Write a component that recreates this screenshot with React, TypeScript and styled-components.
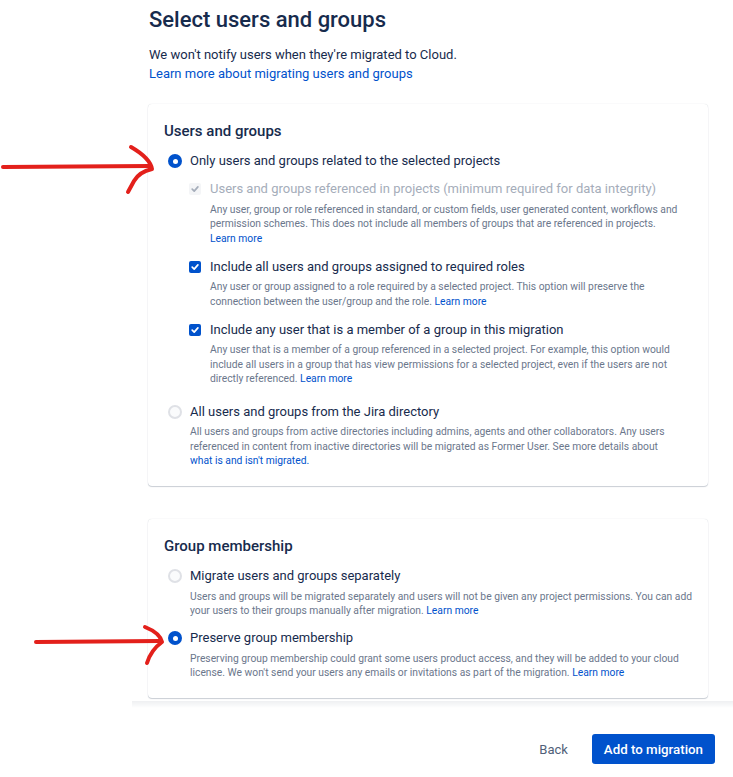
import React from "react";
import styled, { createGlobalStyle } from "styled-components";

const GlobalStyle = createGlobalStyle`
  html, body { margin: 0; padding: 0; background: #ffffff; }
  body {
    font-family: Roboto, "Noto Sans", "Liberation Sans", sans-serif;
    color: #172b4d;
    -webkit-font-smoothing: antialiased;
  }
  * { box-sizing: border-box; }
`;

const Page = styled.div`
  position: relative;
  width: 733px;
  min-height: 777px;
  padding-top: 6px;
`;

const Main = styled.main`
  margin-left: 148px;
  width: 560px;
  display: flex;
  flex-direction: column;
`;

const Title = styled.h1`
  margin: 0 0 0 1px;
  font-size: 22px;
  line-height: 28px;
  font-weight: 500;
  color: #172b4d;
`;

const Intro = styled.p`
  margin: 11px 0 0 1px;
  font-size: 13px;
  line-height: 19px;
  color: #172b4d;
`;

const Link = styled.a`
  color: #0052cc;
  text-decoration: none;
  cursor: pointer;
`;

const Card = styled.section<{ $gapTop?: number }>`
  margin-top: ${(p) => p.$gapTop ?? 0}px;
  background: #fff;
  border-radius: 4px;
  box-shadow: 0 1px 1px rgba(9, 30, 66, 0.2), 0 0 1px rgba(9, 30, 66, 0.2);
  padding: 17px 16px 17.5px 16px;
`;

const CardTitle = styled.h2`
  margin: 0;
  font-size: 15px;
  line-height: 20px;
  font-weight: 500;
  color: #172b4d;
`;

const OptionList = styled.div<{ $gap: number }>`
  margin-top: 10px;
  display: flex;
  flex-direction: column;
  gap: ${(p) => p.$gap}px;
`;

const OptionRow = styled.div`
  display: grid;
  grid-template-columns: 26px 1fr;
`;

const ControlCell = styled.div`
  height: 20px;
  display: flex;
  align-items: center;
  justify-content: center;
  padding-right: 4px;
`;

const Radio = styled.span<{ $checked?: boolean }>`
  width: 14px;
  height: 14px;
  border-radius: 50%;
  display: flex;
  align-items: center;
  justify-content: center;
  background: ${(p) => (p.$checked ? "#0052cc" : "#fafbfc")};
  border: ${(p) => (p.$checked ? "none" : "2px solid #dfe1e6")};
  &::after {
    content: "";
    display: ${(p) => (p.$checked ? "block" : "none")};
    width: 5px;
    height: 5px;
    border-radius: 50%;
    background: #fff;
  }
`;

const Label = styled.div<{ $disabled?: boolean }>`
  font-size: 13px;
  line-height: 20px;
  white-space: nowrap;
  color: ${(p) => (p.$disabled ? "#a5adba" : "#172b4d")};
`;

const Desc = styled.p`
  margin: 3.5px 0 0 0;
  font-size: 10.3px;
  line-height: 14.5px;
  white-space: nowrap;
  color: #6b778c;
`;

const SubList = styled.div`
  margin-top: 8px;
  margin-left: -2px;
  display: flex;
  flex-direction: column;
  gap: 10.5px;
`;

const SubRow = styled.div`
  display: grid;
  grid-template-columns: 22px 1fr;
`;

const CheckCell = styled.div`
  height: 20px;
  display: flex;
  align-items: center;
  padding-left: 1px;
`;

const Checkbox = styled.span<{ $disabled?: boolean }>`
  width: 12px;
  height: 12px;
  border-radius: 2px;
  display: flex;
  align-items: center;
  justify-content: center;
  background: ${(p) => (p.$disabled ? "#f4f5f7" : "#0052cc")};
  color: ${(p) => (p.$disabled ? "#a5adba" : "#ffffff")};
`;

const Footer = styled.footer`
  margin-top: 3px;
  margin-left: 132px;
  height: 74px;
  background: linear-gradient(#eff0f2 0px, #f7f8f9 4px, #ffffff 7px);
  display: flex;
  justify-content: flex-end;
  align-items: flex-end;
  gap: 14px;
  padding: 0 18px 11px 0;
`;

const Button = styled.button<{ $primary?: boolean }>`
  height: 30px;
  border: none;
  border-radius: 3px;
  font-family: inherit;
  font-size: ${(p) => (p.$primary ? 13.3 : 13)}px;
  font-weight: ${(p) => (p.$primary ? 500 : 400)};
  padding: 0 ${(p) => (p.$primary ? 12 : 10)}px;
  background: ${(p) => (p.$primary ? "#0052cc" : "transparent")};
  color: ${(p) => (p.$primary ? "#ffffff" : "#505f79")};
  cursor: pointer;
`;

const Annotations = styled.svg`
  position: absolute;
  left: 0;
  top: 0;
  pointer-events: none;
  overflow: visible;
`;

const Check = () => (
  <svg width="10" height="10" viewBox="0 0 10 10">
    <path d="M2.2 5.2 L4.2 7.1 L7.9 2.9" fill="none" stroke="currentColor" strokeWidth="1.7" strokeLinecap="round" strokeLinejoin="round" />
  </svg>
);

type Sub = { label: string; desc: React.ReactNode; disabled?: boolean };

const subs: Sub[] = [
  {
    label: "Users and groups referenced in projects (minimum required for data integrity)",
    disabled: true,
    desc: (
      <>
        Any user, group or role referenced in standard, or custom fields, user generated content, workflows and
        <br />
        permission schemes. This does not include all members of groups that are referenced in projects.
        <br />
        <Link>Learn more</Link>
      </>
    ),
  },
  {
    label: "Include all users and groups assigned to required roles",
    desc: (
      <>
        Any user or group assigned to a role required by a selected project. This option will preserve the
        <br />
        connection between the user/group and the role. <Link>Learn more</Link>
      </>
    ),
  },
  {
    label: "Include any user that is a member of a group in this migration",
    desc: (
      <>
        Any user that is a member of a group referenced in a selected project. For example, this option would
        <br />
        include all users in a group that has view permissions for a selected project, even if the users are not
        <br />
        directly referenced. <Link>Learn more</Link>
      </>
    ),
  },
];

const Option: React.FC<{ checked?: boolean; label: string; children?: React.ReactNode }> = ({ checked, label, children }) => (
  <OptionRow>
    <ControlCell>
      <Radio $checked={checked} />
    </ControlCell>
    <div>
      <Label>{label}</Label>
      {children}
    </div>
  </OptionRow>
);

export default function App() {
  return (
    <>
      <GlobalStyle />
      <Page>
        <Main>
          <Title>Select users and groups</Title>
          <Intro>
            We won't notify users when they're migrated to Cloud.
            <br />
            <Link>Learn more about migrating users and groups</Link>
          </Intro>

          <Card $gapTop={21}>
            <CardTitle>Users and groups</CardTitle>
            <OptionList $gap={15}>
              <Option checked label="Only users and groups related to the selected projects">
                <SubList>
                  {subs.map((s) => (
                    <SubRow key={s.label}>
                      <CheckCell>
                        <Checkbox $disabled={s.disabled}>
                          <Check />
                        </Checkbox>
                      </CheckCell>
                      <div>
                        <Label $disabled={s.disabled}>{s.label}</Label>
                        <Desc>{s.desc}</Desc>
                      </div>
                    </SubRow>
                  ))}
                </SubList>
              </Option>
              <Option label="All users and groups from the Jira directory">
                <Desc>
                  All users and groups from active directories including admins, agents and other collaborators. Any users
                  <br />
                  referenced in content from inactive directories will be migrated as Former User. See more details about
                  <br />
                  <Link>what is and isn't migrated.</Link>
                </Desc>
              </Option>
            </OptionList>
          </Card>

          <Card $gapTop={33}>
            <CardTitle>Group membership</CardTitle>
            <OptionList $gap={9.5}>
              <Option label="Migrate users and groups separately">
                <Desc>
                  Users and groups will be migrated separately and users will not be given any project permissions. You can add
                  <br />
                  your users to their groups manually after migration. <Link>Learn more</Link>
                </Desc>
              </Option>
              <Option checked label="Preserve group membership">
                <Desc>
                  Preserving group membership could grant some users product access, and they will be added to your cloud
                  <br />
                  license. We won't send your users any emails or invitations as part of the migration. <Link>Learn more</Link>
                </Desc>
              </Option>
            </OptionList>
          </Card>
        </Main>

        <Footer>
          <Button>Back</Button>
          <Button $primary>Add to migration</Button>
        </Footer>

        <Annotations width="733" height="777" viewBox="0 0 733 777">
          <g fill="none" stroke="#e3201b" strokeWidth="4" strokeLinecap="round" strokeLinejoin="round">
            <path d="M3 167 L150 166" />
            <path d="M131 147 Q150 158 152 169 Q139 172 134 181 L128 192" />
            <path d="M36 642 L160 641" />
            <path d="M145 627 Q160 633 162 642 Q151 650 147 663" />
          </g>
        </Annotations>
      </Page>
    </>
  );
}
